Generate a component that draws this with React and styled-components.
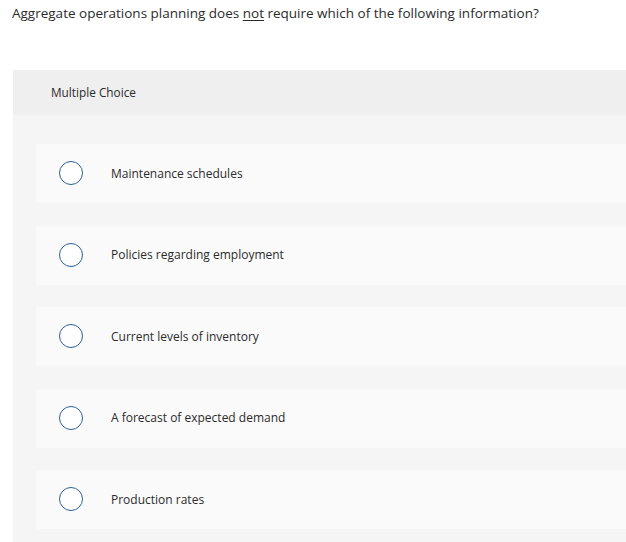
import React from 'react';
import styled, { createGlobalStyle } from 'styled-components';

const GlobalStyle = createGlobalStyle`
  html, body {
    margin: 0;
    padding: 0;
    background: #ffffff;
  }
  body {
    font-family: "Open Sans", "Liberation Sans", sans-serif;
    color: #333333;
  }
`;

const Page = styled.div`
  width: 626px;
  height: 542px;
  overflow: hidden;
  display: flex;
  flex-direction: column;
`;

const Question = styled.p`
  margin: 0;
  padding: 4px 0 0 12px;
  height: 70px;
  box-sizing: border-box;
  font-size: 13.5px;
  line-height: 18px;
  color: #2b2b2b;

  u {
    text-decoration-thickness: 1px;
    text-underline-offset: 2px;
  }
`;

const Panel = styled.section`
  margin-left: 13px;
  flex: 1;
  display: flex;
  flex-direction: column;
  background: #f5f5f5;
`;

const PanelHeader = styled.div`
  height: 45px;
  box-sizing: border-box;
  display: flex;
  align-items: center;
  padding: 0 0 2px 38px;
  background: #efefef;
  font-size: 11.8px;
  color: #2b2b2b;
`;

const OptionList = styled.div`
  display: flex;
  flex-direction: column;
  gap: 22.5px;
  padding: 29px 0 0 23px;
`;

const OptionCard = styled.label`
  height: 59px;
  box-sizing: border-box;
  display: flex;
  align-items: center;
  padding: 0 0 1px 23px;
  background: #fafafa;
  border-radius: 3px 0 0 3px;
  cursor: pointer;
`;

const Radio = styled.span`
  width: 22px;
  height: 22px;
  flex: none;
  border: 1.5px solid #2d5f93;
  border-radius: 50%;
  background: #ffffff;
`;

const OptionText = styled.span`
  margin-left: 28px;
  font-size: 12px;
  color: #2b2b2b;
`;

const options = [
  'Maintenance schedules',
  'Policies regarding employment',
  'Current levels of inventory',
  'A forecast of expected demand',
  'Production rates',
];

export default function App() {
  return (
    <Page>
      <GlobalStyle />
      <Question>
        Aggregate operations planning does <u>not</u> require which of the following information?
      </Question>
      <Panel>
        <PanelHeader>Multiple Choice</PanelHeader>
        <OptionList>
          {options.map((text) => (
            <OptionCard key={text}>
              <Radio />
              <OptionText>{text}</OptionText>
            </OptionCard>
          ))}
        </OptionList>
      </Panel>
    </Page>
  );
}
